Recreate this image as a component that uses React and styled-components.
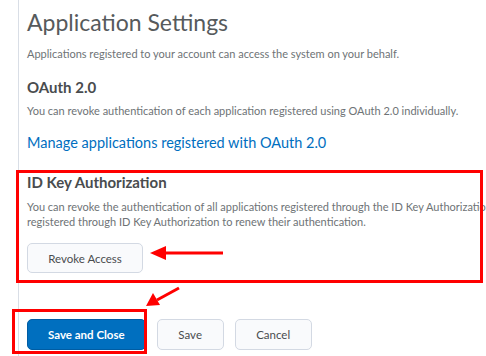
import styled, { createGlobalStyle } from "styled-components";

const GlobalStyle = createGlobalStyle`
  html, body {
    margin: 0;
    padding: 0;
    background: #ffffff;
    overflow: hidden;
  }
  body {
    font-family: Lato, "Noto Sans", sans-serif;
    color: #494c4e;
  }
`;

const Page = styled.div`
  width: 486px;
  height: 356px;
  position: relative;
  overflow: hidden;
`;

const Gutter = styled.div`
  margin-left: 18px;
  border-left: 1px solid #d9dee6;
  padding-left: 8px;
  min-height: 356px;
  box-sizing: border-box;
`;

const Title = styled.h1`
  margin: 0;
  padding-top: 8px;
  font-size: 23px;
  font-weight: 400;
  line-height: 28px;
  color: #565a5c;
`;

const Text = styled.p`
  margin: ${(p) => p.$margin || "0"};
  font-size: 11px;
  line-height: 15px;
  color: #6e7376;
  white-space: nowrap;
`;

const Heading = styled.h2`
  margin: ${(p) => p.$margin || "0"};
  font-size: 15px;
  font-weight: 700;
  line-height: 20px;
  color: #494c4e;
`;

const Link = styled.a`
  display: block;
  margin-top: 15px;
  font-size: 14.5px;
  line-height: 20px;
  color: #006fbf;
  text-decoration: none;
`;

const Section = styled.section`
  position: relative;
  margin-top: 19px;
`;

const Annotation = styled.div`
  position: absolute;
  border: 3px solid #ff0000;
  pointer-events: none;
  left: ${(p) => p.$left}px;
  top: ${(p) => p.$top}px;
  width: ${(p) => p.$width}px;
  height: ${(p) => p.$height}px;
  box-sizing: border-box;
`;

const Button = styled.button`
  height: ${(p) => p.$h || 31}px;
  padding: 0 ${(p) => p.$pad || 20}px;
  min-width: ${(p) => p.$min || 0}px;
  border-radius: 5px;
  font-family: Lato, "Noto Sans", sans-serif;
  font-size: 11.5px;
  font-weight: ${(p) => (p.$primary ? 700 : 400)};
  color: ${(p) => (p.$primary ? "#ffffff" : "#494c4e")};
  background: ${(p) => (p.$primary ? "#006fbf" : "#f9fafc")};
  border: 1px solid ${(p) => (p.$primary ? "#005ca3" : "#d3d9e3")};
  box-sizing: border-box;
  cursor: pointer;
`;

const RevokeRow = styled.div`
  margin-top: 14px;
  display: flex;
`;

const Actions = styled.div`
  margin-top: 46px;
  display: flex;
  gap: 11px;
`;

const Arrows = styled.svg`
  position: absolute;
  left: 0;
  top: 0;
  pointer-events: none;
`;

export default function App() {
  return (
    <Page>
      <GlobalStyle />
      <Gutter>
        <Title>Application Settings</Title>
        <Text $margin="10px 0 0">
          Applications registered to your account can access the system on your behalf.
        </Text>
        <Heading $margin="16px 0 0">OAuth 2.0</Heading>
        <Text $margin="6px 0 0">
          You can revoke authentication of each application registered using OAuth 2.0 individually.
        </Text>
        <Link href="#">Manage applications registered with OAuth 2.0</Link>
        <Section>
          <Heading>ID Key Authorization</Heading>
          <Text $margin="7px 0 0">
            You can revoke the authentication of all applications registered through the ID Key Authorization method
            <br />
            registered through ID Key Authorization to renew their authentication.
          </Text>
          <RevokeRow>
            <Button $min={116} $h={30}>Revoke Access</Button>
          </RevokeRow>
        </Section>
        <Actions>
          <Button $primary $min={116}>Save and Close</Button>
          <Button $min={67}>Save</Button>
          <Button $min={77}>Cancel</Button>
        </Actions>
      </Gutter>
      <Annotation $left={16} $top={170} $width={467} $height={113} />
      <Annotation $left={12} $top={309} $width={135} $height={45} />
      <Arrows width="486" height="356" viewBox="0 0 486 356">
        <line x1="223" y1="253" x2="162" y2="253" stroke="#ff0000" strokeWidth="3" />
        <polygon points="150,253 166,246 166,260" fill="#ff0000" />
        <line x1="179" y1="288" x2="157" y2="300" stroke="#ff0000" strokeWidth="3" />
        <polygon points="146,306 153,293 160,305" fill="#ff0000" />
      </Arrows>
    </Page>
  );
}
